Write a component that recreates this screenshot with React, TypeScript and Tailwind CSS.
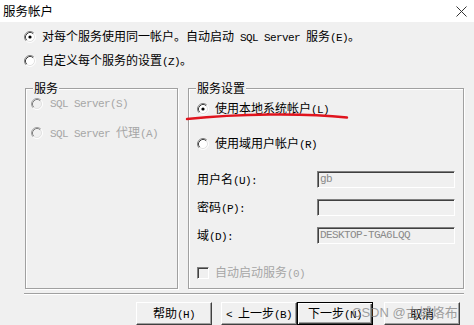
import type { ReactNode } from 'react'

function M({ children }: { children: ReactNode }) {
  return <span className="font-['Liberation_Mono',monospace] text-[11px] tracking-[-0.6px]">{children}</span>
}

function Radio({ checked, disabled }: { checked?: boolean; disabled?: boolean }) {
  return (
    <svg width="12" height="12" viewBox="0 0 12 12" className="shrink-0">
      <circle cx="6" cy="6" r="5" fill={disabled ? '#f0f0f0' : '#fff'} />
      <path d="M9.89 2.11A5.5 5.5 0 0 0 2.11 9.89" fill="none" stroke={disabled ? '#a0a0a0' : '#808080'} />
      <path d="M9.18 2.82A4.5 4.5 0 0 0 2.82 9.18" fill="none" stroke={disabled ? '#808080' : '#404040'} />
      <path d="M2.11 9.89A5.5 5.5 0 0 0 9.89 2.11" fill="none" stroke="#fff" />
      <path d="M2.82 9.18A4.5 4.5 0 0 0 9.18 2.82" fill="none" stroke="#e3e3e3" />
      {checked && <circle cx="6" cy="6" r="1.6" fill="#000" />}
    </svg>
  )
}

function Field({ label, value }: { label: ReactNode; value?: string }) {
  return (
    <div className="flex h-[17px] items-center">
      <div className="w-[120px] leading-[16px]">{label}</div>
      <div className="flex h-[17px] w-[138px] items-center border border-t-[#808080] border-l-[#808080] border-r-white border-b-white bg-[#f0f0f0] pl-[2px] text-[#8a8a8a] shadow-[inset_1px_1px_0_#404040]">
        {value && <M>{value}</M>}
      </div>
    </div>
  )
}

function Button({ children, primary }: { children: ReactNode; primary?: boolean }) {
  return (
    <div
      className={
        primary
          ? 'flex h-[23px] w-[76px] items-center justify-center border border-black bg-[#f0f0f0] shadow-[inset_1px_1px_0_#fff,inset_-1px_-1px_0_#404040,inset_-2px_-2px_0_#a0a0a0]'
          : 'flex h-[23px] w-[76px] items-center justify-center border border-t-white border-l-white border-r-[#404040] border-b-[#404040] bg-[#f0f0f0] shadow-[inset_-1px_-1px_0_#a0a0a0]'
      }
    >
      <span className="whitespace-pre leading-[16px]">{children}</span>
    </div>
  )
}

export default function App() {
  return (
    <div className="relative h-[325px] w-[474px] overflow-hidden bg-[#f0f0f0] font-['Noto_Sans_CJK_SC','Liberation_Sans',sans-serif] text-[12px] text-black">
      {/* Title bar */}
      <div className="flex h-[22px] items-center justify-between bg-white pl-[3px] pr-[7px]">
        <span className="text-[12.5px] leading-[16px]">服务帐户</span>
        <svg width="11" height="11" viewBox="0 0 11 11">
          <path d="M0.5 0.5L10.5 10.5M10.5 0.5L0.5 10.5" stroke="#333" strokeWidth="1" />
        </svg>
      </div>

      {/* Account mode */}
      <div className="flex flex-col gap-[8px] pl-[24px] pt-[7px]">
        <div className="flex h-[16px] items-center gap-[6px] leading-[16px]">
          <Radio checked />
          <span>
            对每个服务使用同一帐户。自动启动<M> SQL Server </M>服务<M>(E)</M>。
          </span>
        </div>
        <div className="flex h-[16px] items-center gap-[6px] leading-[16px]">
          <Radio />
          <span>
            自定义每个服务的设置<M>(Z)</M>。
          </span>
        </div>
      </div>

      {/* Group boxes */}
      <div className="mt-[19px] flex gap-[10px] pl-[25px]">
        <div className="relative h-[201px] w-[153px] border border-[#a0a0a0] shadow-[inset_1px_1px_0_#fff,1px_1px_0_#fff]">
          <span className="absolute left-[7px] top-[-9px] bg-[#f0f0f0] px-[1px] leading-[16px]">服务</span>
          <div className="flex flex-col gap-[13px] pl-[5px] pt-[7px] text-[#a6a6a6]">
            <div className="flex h-[16px] items-center gap-[7px] leading-[16px]">
              <Radio disabled />
              <M>SQL Server(S)</M>
            </div>
            <div className="flex h-[16px] items-center gap-[7px] leading-[16px]">
              <Radio disabled />
              <span>
                <M>SQL Server </M>代理<M>(A)</M>
              </span>
            </div>
          </div>
        </div>

        <div className="relative h-[201px] w-[276px] border border-[#a0a0a0] shadow-[inset_1px_1px_0_#fff,1px_1px_0_#fff]">
          <span className="absolute left-[7px] top-[-9px] bg-[#f0f0f0] px-[1px] leading-[16px]">服务设置</span>
          <div className="flex flex-col pl-[8px] pt-[12px]">
            <div className="flex h-[16px] items-center gap-[6px] leading-[16px]">
              <Radio checked />
              <span>
                使用本地系统帐户<M>(L)</M>
              </span>
            </div>
            <div className="mt-[19px] flex h-[16px] items-center gap-[6px] leading-[16px]">
              <Radio />
              <span>
                使用域用户帐户<M>(R)</M>
              </span>
            </div>
            <div className="mt-[19px] flex flex-col gap-[11px]">
              <Field label={<>用户名<M>(U):</M></>} value="gb" />
              <Field label={<>密码<M>(P):</M></>} />
              <Field label={<>域<M>(D):</M></>} value="DESKTOP-TGA6LQQ" />
            </div>
            <div className="mt-[21px] flex h-[16px] items-center gap-[6px] leading-[16px] text-[#a6a6a6]">
              <span className="h-[12px] w-[12px] border border-t-[#808080] border-l-[#808080] border-r-white border-b-white bg-[#f0f0f0] shadow-[inset_1px_1px_0_#404040]" />
              <span>
                自动启动服务<M>(0)</M>
              </span>
            </div>
          </div>
        </div>
      </div>

      {/* Separator */}
      <div className="ml-[24px] mt-[4px] h-[2px] w-[440px] border-t border-t-[#a0a0a0] border-b border-b-white" />

      {/* Buttons */}
      <div className="mt-[7px] flex pl-[136px]">
        <Button>
          帮助<M>(H)</M>
        </Button>
        <div className="ml-[9px] flex">
          <Button>
            <M>{'< '}</M>上一步<M>(B)</M>
          </Button>
          <Button primary>
            下一步<M>(N)</M>
          </Button>
        </div>
        <div className="ml-[11px]">
          <Button>取消</Button>
        </div>
      </div>

      {/* Red underline annotation */}
      <svg className="pointer-events-none absolute left-0 top-0" width="474" height="325" viewBox="0 0 474 325">
        <path d="M187 119 Q225 115 270 114.5 T347 117.5" fill="none" stroke="#e0141e" strokeWidth="2.4" strokeLinecap="round" />
      </svg>

      {/* Watermark */}
      <span className="pointer-events-none absolute left-[352px] top-[304px] font-['Liberation_Sans','Noto_Sans_CJK_SC',sans-serif] text-[13px] leading-[18px] text-[rgba(130,130,130,0.75)]">
        CSDN @古城烙布
      </span>
    </div>
  )
}
